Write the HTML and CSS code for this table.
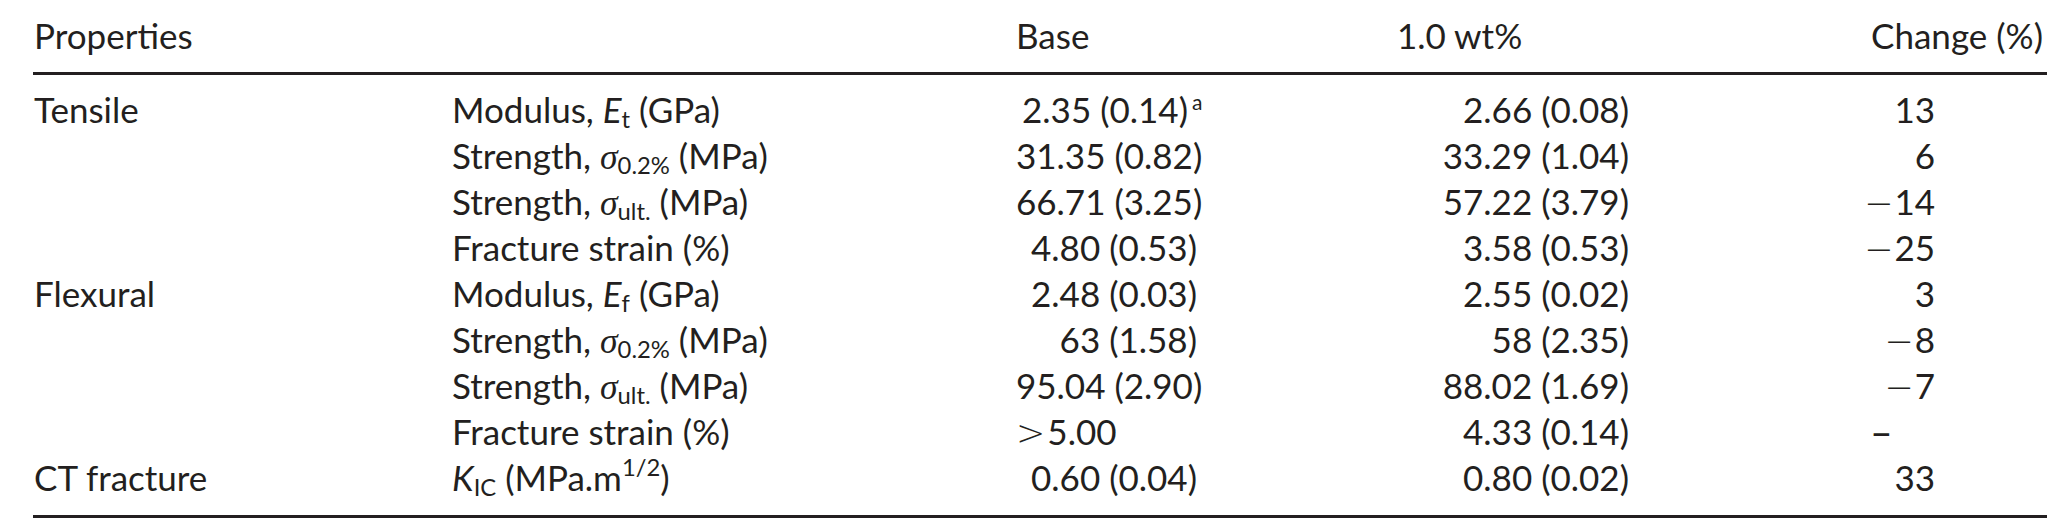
FILE: index.html
```html
<!DOCTYPE html>
<html lang="en">
<head>
<meta charset="utf-8">
<title>Properties table</title>
<link rel="stylesheet" href="styles.css">
</head>
<body>
<table class="props">
  <colgroup>
    <col class="c1"><col class="c2"><col class="c3"><col class="c4"><col class="c5">
  </colgroup>
  <thead>
    <tr>
      <th class="lbl">Properties</th>
      <th></th>
      <th class="hl">Base</th>
      <th class="hl">1.0 wt%</th>
      <th class="hr">Change (%)</th>
    </tr>
  </thead>
  <tbody>
    <tr class="first">
      <td class="lbl">Tensile</td>
      <td class="desc">Modulus, <i class="var">E</i><sub>t</sub> (GPa)</td>
      <td class="base">2.35 (0.14)<span class="fn"><sup>a</sup></span></td>
      <td class="wt">2.66 (0.08)</td>
      <td class="chg">13</td>
    </tr>
    <tr>
      <td class="lbl"></td>
      <td class="desc">Strength, <i class="sig">σ</i><sub>0.2%</sub> (MPa)</td>
      <td class="base">31.35 (0.82)</td>
      <td class="wt">33.29 (1.04)</td>
      <td class="chg">6</td>
    </tr>
    <tr>
      <td class="lbl"></td>
      <td class="desc">Strength, <i class="sig">σ</i><sub>ult.</sub> (MPa)</td>
      <td class="base">66.71 (3.25)</td>
      <td class="wt">57.22 (3.79)</td>
      <td class="chg"><span class="minus">−</span>14</td>
    </tr>
    <tr>
      <td class="lbl"></td>
      <td class="desc">Fracture strain (%)</td>
      <td class="base">4.80 (0.53)</td>
      <td class="wt">3.58 (0.53)</td>
      <td class="chg"><span class="minus">−</span>25</td>
    </tr>
    <tr>
      <td class="lbl">Flexural</td>
      <td class="desc">Modulus, <i class="var">E</i><sub>f</sub> (GPa)</td>
      <td class="base">2.48 (0.03)</td>
      <td class="wt">2.55 (0.02)</td>
      <td class="chg">3</td>
    </tr>
    <tr>
      <td class="lbl"></td>
      <td class="desc">Strength, <i class="sig">σ</i><sub>0.2%</sub> (MPa)</td>
      <td class="base">63 (1.58)</td>
      <td class="wt">58 (2.35)</td>
      <td class="chg"><span class="minus">−</span>8</td>
    </tr>
    <tr>
      <td class="lbl"></td>
      <td class="desc">Strength, <i class="sig">σ</i><sub>ult.</sub> (MPa)</td>
      <td class="base">95.04 (2.90)</td>
      <td class="wt">88.02 (1.69)</td>
      <td class="chg"><span class="minus">−</span>7</td>
    </tr>
    <tr>
      <td class="lbl"></td>
      <td class="desc">Fracture strain (%)</td>
      <td class="base base-left"><span class="gt">&gt;</span>5.00</td>
      <td class="wt">4.33 (0.14)</td>
      <td class="chg chg-dash"><span class="dash">–</span></td>
    </tr>
    <tr class="last">
      <td class="lbl">CT fracture</td>
      <td class="desc"><i class="var">K</i><sub>IC</sub> (MPa.m<sup>1/2</sup>)</td>
      <td class="base">0.60 (0.04)</td>
      <td class="wt">0.80 (0.02)</td>
      <td class="chg">33</td>
    </tr>
  </tbody>
</table>
</body>
</html>
```

FILE: styles.css
```css
html, body {
  margin: 0;
  padding: 0;
  background: #ffffff;
}

body {
  font-family: Lato, "Open Sans", sans-serif;
  font-size: 35px;
  color: #231f20;
}

.props {
  margin-left: 33px;
  width: 2014px;
  table-layout: fixed;
  border-collapse: separate;
  border-spacing: 0;
  line-height: 46px;
}

.c1 { width: 419px; }
.c2 { width: 564px; }
.c3 { width: 381px; }
.c4 { width: 243px; }
.c5 { width: 407px; }

.props th,
.props td {
  padding: 0;
  font-weight: 400;
  white-space: nowrap;
  vertical-align: baseline;
}

.props thead th {
  padding-top: 12px;
  padding-bottom: 14px;
  border-bottom: 3px solid #231f20;
}

.props th.lbl,
.props td.lbl { text-align: left; padding-left: 1px; }
.props th.hl { text-align: left; }
.props th.hr { text-align: right; padding-right: 4px; }

.props tbody tr.first td { padding-top: 11px; }
.props tbody tr.last td {
  padding-bottom: 15px;
  border-bottom: 3px solid #231f20;
}

.props td.desc { text-align: left; }

.props td.base { text-align: right; padding-right: 200px; }
.props td.base-left { text-align: left; padding-right: 0; }
.props td.wt { text-align: right; padding-right: 11px; }
.props td.chg { text-align: right; padding-right: 112px; }
.props td.chg-dash { padding-right: 156px; }

.var {
  font-style: italic;
}

.sig {
  font-family: "Liberation Serif", "DejaVu Serif", serif;
  font-style: italic;
  font-size: 1.02em;
  line-height: 0;
}

sub, sup {
  font-size: 0.68em;
  line-height: 0;
}

sub {
  vertical-align: -0.22em;
}

sup {
  vertical-align: 0.62em;
}

.fn {
  display: inline-block;
  width: 9px;
  white-space: nowrap;
}

.fn sup {
  margin-left: 4px;
  font-size: 0.6em;
}

.minus {
  font-family: "DejaVu Sans", sans-serif;
  font-weight: 300;
  line-height: 0;
  margin-right: 1px;
}

.gt {
  font-family: "DejaVu Sans", sans-serif;
  font-weight: 300;
  line-height: 0;
  margin-right: 2px;
}

.dash {
  font-family: "DejaVu Sans", sans-serif;
  line-height: 0;
  font-size: 1.1em;
}
```
